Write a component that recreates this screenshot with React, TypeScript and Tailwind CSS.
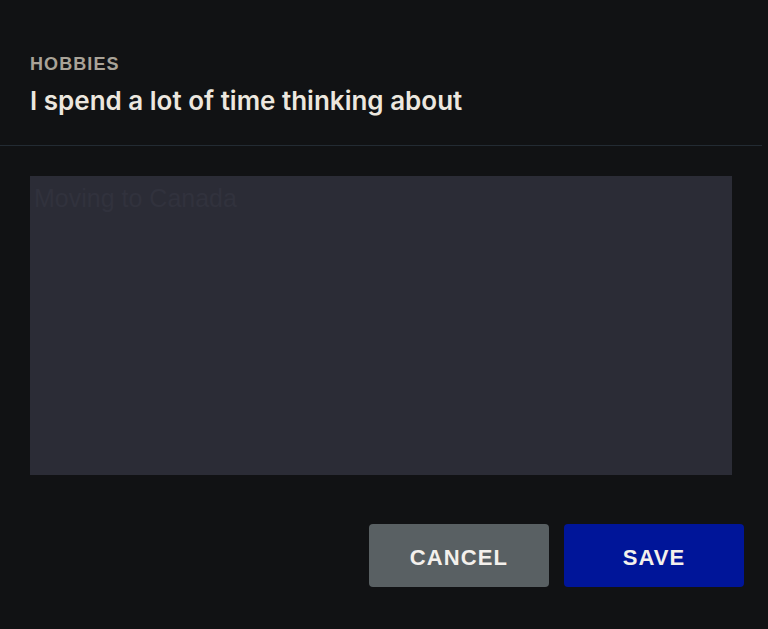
export default function App() {
  return (
    <div className="min-h-[629px] w-[768px] bg-[#111214] font-['Liberation_Sans',sans-serif]">
      <div className="w-[762px]">
        <header className="border-b border-[#232b33] px-[30px] pb-[28px] pt-[54px]">
          <h2 className="text-[18px] font-bold uppercase leading-[20px] tracking-[0.06em] text-[#a9a398]">
            Hobbies
          </h2>
          <p className="mt-[11px] font-['Inter',sans-serif] text-[26px] font-semibold leading-[32px] text-[#ece7df]">
            I spend a lot of time thinking about
          </p>
        </header>

        <div className="px-[30px] pt-[30px]">
          <textarea
            placeholder="Moving to Canada"
            className="block h-[299px] w-[702px] resize-none bg-[#2b2c36] px-[4px] pt-[8px] text-[25px] leading-[28px] text-[#ece7df] outline-none placeholder:text-[#31323d]"
          />
        </div>

        <div className="mt-[49px] flex justify-end gap-[15px] pr-[18px]">
          <button className="h-[63px] w-[180px] rounded-[4px] bg-[#596063] pt-[3px] text-[22px] font-bold tracking-[0.05em] text-[#f3f0ec]">
            CANCEL
          </button>
          <button className="h-[63px] w-[180px] rounded-[4px] bg-[#001599] pt-[3px] text-[22px] font-bold tracking-[0.05em] text-[#f3f0ec]">
            SAVE
          </button>
        </div>
      </div>
    </div>
  );
}
